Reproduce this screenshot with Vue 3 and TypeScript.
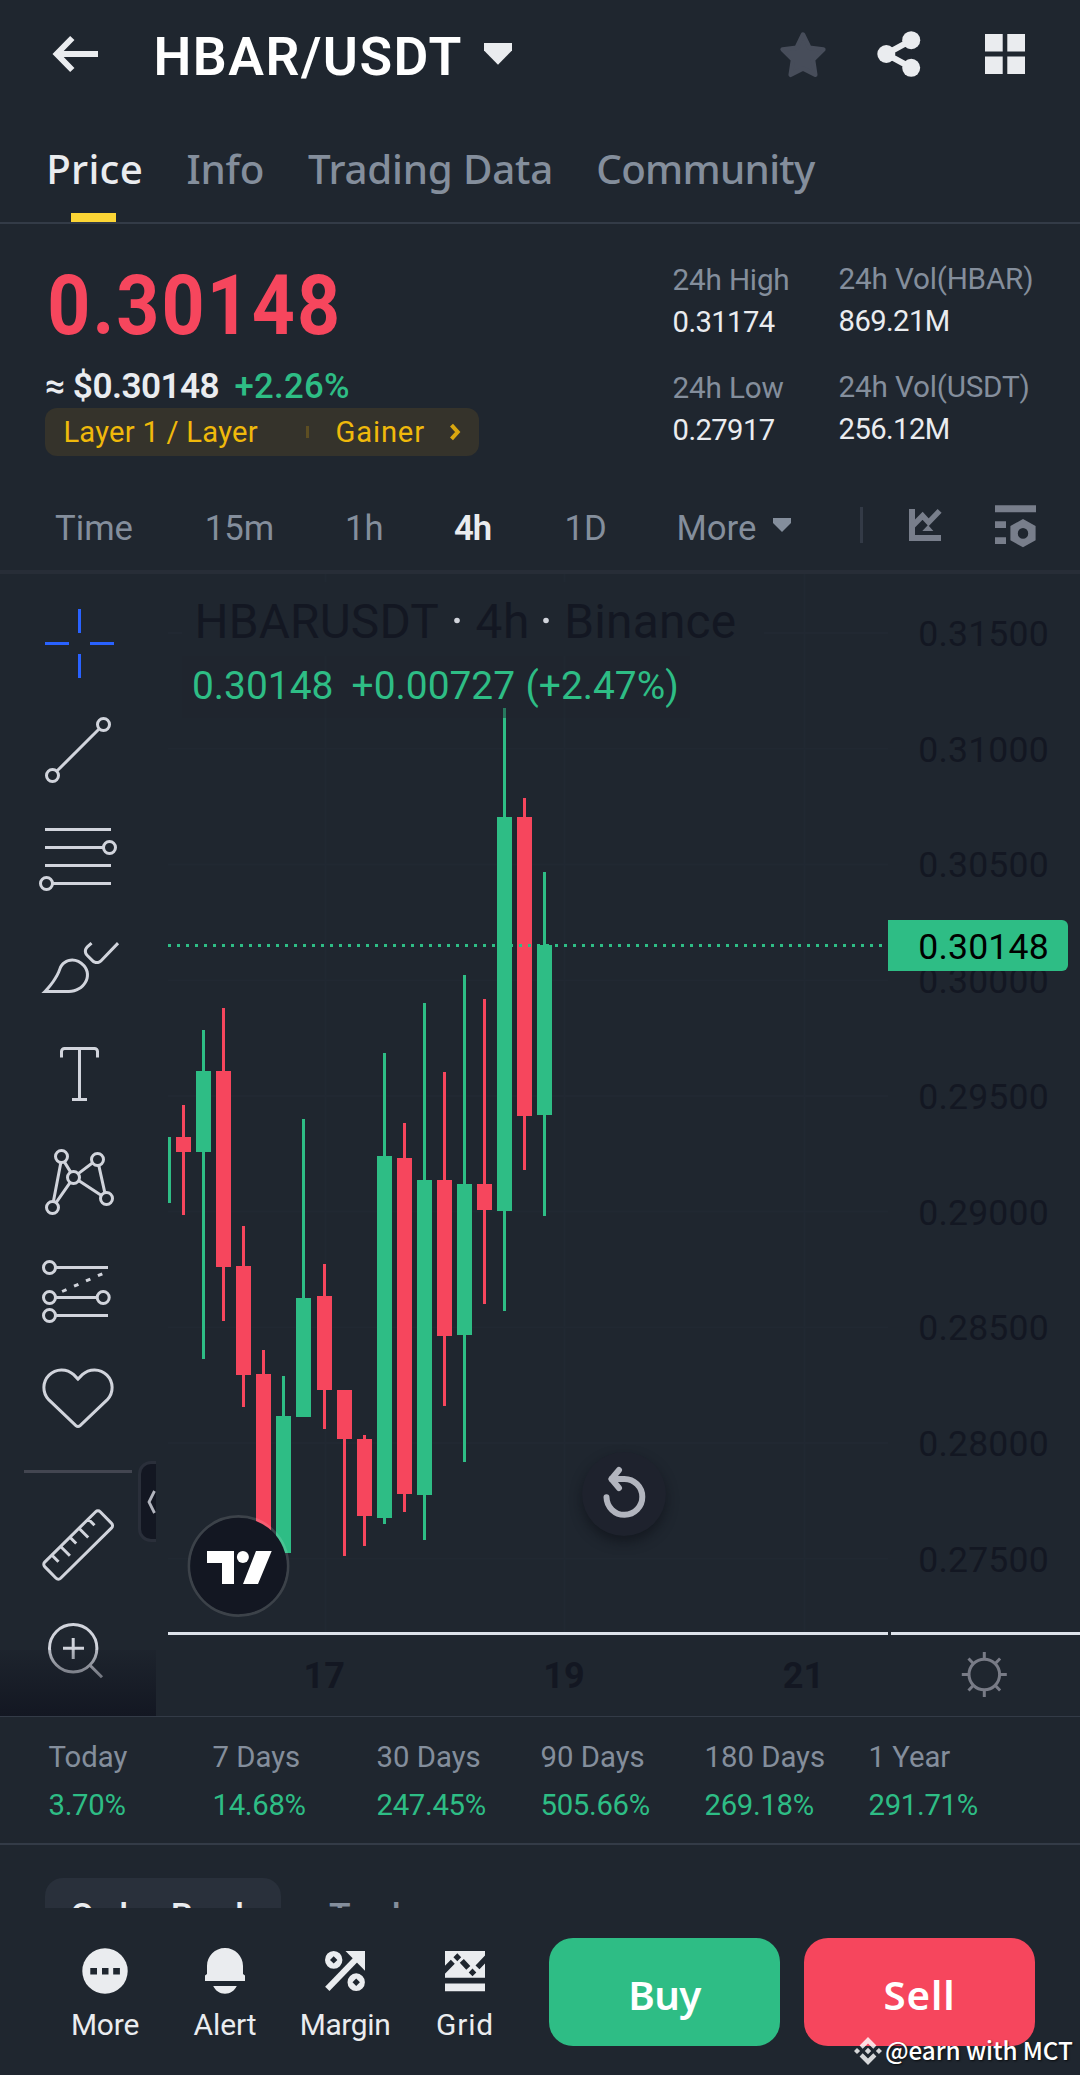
<script setup lang="ts">
interface Candle {
  x: number
  high: number
  top: number
  bottom: number
  low: number
  up: boolean
}

const tabs = ['Price', 'Info', 'Trading Data', 'Community']

const stats = [
  [
    { label: '24h High', value: '0.31174' },
    { label: '24h Low', value: '0.27917' },
  ],
  [
    { label: '24h Vol(HBAR)', value: '869.21M' },
    { label: '24h Vol(USDT)', value: '256.12M' },
  ],
]

const periods = ['Time', '15m', '1h', '4h', '1D']

const performance = [
  { label: 'Today', value: '3.70%' },
  { label: '7 Days', value: '14.68%' },
  { label: '30 Days', value: '247.45%' },
  { label: '90 Days', value: '505.66%' },
  { label: '180 Days', value: '269.18%' },
  { label: '1 Year', value: '291.71%' },
]

const c = (x: number, high: number, top: number, bottom: number, low: number, up: boolean): Candle => ({
  x, high, top, bottom, low, up,
})

const candles: Candle[] = [
  c(176, 1105, 1137, 1152, 1215, false),
  c(196, 1030, 1071, 1152, 1359, true),
  c(216, 1008, 1071, 1267, 1321, false),
  c(236, 1226, 1266, 1375, 1407, false),
  c(256, 1350, 1374, 1540, 1540, false),
  c(276, 1376, 1416, 1553, 1553, true),
  c(296, 1119, 1298, 1417, 1417, true),
  c(317, 1264, 1296, 1390, 1429, false),
  c(337, 1390, 1390, 1439, 1556, false),
  c(357, 1435, 1439, 1516, 1546, false),
  c(377, 1053, 1156, 1518, 1524, true),
  c(397, 1123, 1158, 1494, 1512, false),
  c(417, 1003, 1180, 1495, 1540, true),
  c(437, 1072, 1180, 1336, 1406, false),
  c(457, 975, 1184, 1335, 1462, true),
  c(477, 999, 1184, 1210, 1304, false),
  c(497, 708, 817, 1211, 1311, true),
  c(517, 798, 817, 1116, 1170, false),
  c(537, 872, 945, 1115, 1216, true),
]

const scale = ['0.31500', '0.31000', '0.30500', '0.30000', '0.29500', '0.29000', '0.28500', '0.28000', '0.27500']
const scaleY = (i: number): number => 646 + i * 115.72
</script>

<template>
  <main class="app">
    <header class="header">
      <svg class="back" width="50" height="112" viewBox="50 0 50 112" fill="none" stroke="#eaecef" stroke-width="6">
        <path d="M72.3 38 56.7 54l15.6 16M57 54h41" />
      </svg>
      <h1 class="pair">HBAR/USDT</h1>
      <svg class="pair-arrow" width="28" height="112" viewBox="484 0 28 112" fill="#eaecef">
        <path d="M484 43h28v7.5l-14 14.2-14-14.2z" />
      </svg>
      <svg class="star" width="50" height="112" viewBox="778 0 50 112">
        <path d="M803 34.5l6.4 13.2 14 1.7-10.4 10.2 2.3 15.2L803 68.6l-12.3 6.2 2.3-15.2-10.4-10.2 14-1.7z" fill="#474d5a" stroke="#474d5a" stroke-width="4.5" stroke-linejoin="round" />
      </svg>
      <svg class="share" width="50" height="112" viewBox="875 0 50 112" fill="#eaecef">
        <path d="M911 40.300 886 54l25 13.500" fill="none" stroke="#eaecef" stroke-width="6" />
        <circle cx="911.200" cy="40.200" r="9" />
        <circle cx="886.300" cy="54" r="9" />
        <circle cx="911.200" cy="67.800" r="9" />
      </svg>
      <svg class="apps" width="42" height="112" viewBox="984 0 42 112" fill="#eaecef">
        <path d="M985 34h17.700v17.500H985zM1007.300 34h17.700v17.500h-17.700zM985 56.500h17.700V74H985zM1007.300 56.500h17.700V74h-17.700z" />
      </svg>
    </header>

    <nav class="tabs">
      <span v-for="(tab, i) in tabs" :key="tab" class="tab" :class="[`tab-${i}`, { active: i === 0 }]">{{ tab }}</span>
    </nav>

    <section class="summary">
      <div class="quote">
        <div class="last">0.30148</div>
        <div class="fiat"><span class="approx">≈ $0.30148</span><span class="change">+2.26%</span></div>
        <div class="tags">
          <span class="tag-a">Layer 1 / Layer</span>
          <i class="tag-sep"></i>
          <span class="tag-b">Gainer</span>
          <svg width="12" height="20" viewBox="449.500 422.300 12 20" fill="none" stroke="#d9a70f" stroke-width="4">
            <path d="M452 425.500l6.200 6.800-6.200 6.800" />
          </svg>
        </div>
      </div>
      <div v-for="(col, i) in stats" :key="i" class="stat-col">
        <div v-for="s in col" :key="s.label" class="stat">
          <div class="stat-label">{{ s.label }}</div>
          <div class="stat-value">{{ s.value }}</div>
        </div>
      </div>
    </section>

    <section class="periods">
      <span v-for="p in periods" :key="p" :class="{ selected: p === '4h' }">{{ p }}</span>
      <span class="more">More
        <svg width="18" height="84" viewBox="773 486 18 84" fill="#848e9c"><path d="M773 518h18v5l-9 9-9-9z" /></svg>
      </span>
      <i class="divider"></i>
      <svg width="86" height="84" viewBox="908 486 86 84" fill="#787e8b">
        <path d="M909 509h6v26h26v6h-32zM922.300 531l5.700-6 5.400 6z" />
        <path d="M913 525.500l9.600-9.700 6 6.500 11-11.500" fill="none" stroke="#787e8b" stroke-width="5.500" />
      </svg>
      <svg width="43" height="84" viewBox="994 486 43 84" fill="#787e8b">
        <path d="M995 505.300h41v7h-41zM995 521.300h11v6.700h-11zM995 537.300h11v6.700h-11z" />
        <path fill-rule="evenodd" d="M1023 519l12.600 7v14.300l-12.600 7-12.600-7V526zM1023 528a5.200 5.400 0 1 0 0 10.800 5.200 5.400 0 1 0 0-10.800z" />
      </svg>
    </section>

    <section class="chart">
      <aside class="tools">
        <svg viewBox="0 0 28 28" class="cross"><path d="M14.500 3v8M14.500 18v8M3 14.500h8M18 14.500h8" /></svg>
        <svg viewBox="0 0 28 28"><path d="M6.900 21.100 21.100 6.900" /><circle cx="22.500" cy="5.500" r="2" /><circle cx="5.500" cy="22.500" r="2" /></svg>
        <svg viewBox="0 0 28 28"><path d="M3 4.500h22M3 10.500h19.500M3 16.500h22M5.500 22.500H25" /><circle cx="24.500" cy="10.500" r="2" /><circle cx="3.500" cy="22.500" r="2" /></svg>
        <svg viewBox="0 0 28 28" class="solid">
          <path d="M1.789 23l.859-.854.221-.228c.18-.19.38-.409.597-.655.619-.704 1.238-1.478 1.815-2.298.982-1.396 1.738-2.776 2.177-4.081 1.234-3.667 5.957-4.716 8.923-1.263 3.251 3.785-.037 9.380-5.379 9.380h-9.211zm9.211-1c4.544 0 7.272-4.642 4.621-7.728-2.450-2.853-6.225-2.015-7.216.931-.474 1.408-1.273 2.869-2.307 4.337-.599.852-1.241 1.653-1.882 2.383l-.068.078h6.853z" />
          <path d="M18.182 6.002l-1.419 1.286c-1.031.935-1.075 2.501-.096 3.480l1.877 1.877c.976.976 2.553.954 3.513-.045l5.650-5.874-.721-.693-5.650 5.874c-.574.596-1.507.609-2.086.031l-1.877-1.877c-.574-.574-.548-1.480.061-2.032l1.419-1.286-.672-.741z" />
        </svg>
        <svg viewBox="0 0 28 28"><path d="M8.500 8.500v-2a1 1 0 0 1 1-1h10a1 1 0 0 1 1 1v2M14.500 5.500v17M12 22.500h5" /></svg>
        <svg viewBox="0 0 28 28"><path d="M8.300 7.400 5.800 20.500M9.400 7.200l2.200 3.600M11.400 14.100 6.700 20.900M14.100 11.200l4.800-3.600M14.200 13.500l7.500 4.900M20.900 8.400l2 9" /><circle cx="8.500" cy="5.500" r="2" /><circle cx="20.500" cy="6.500" r="2" /><circle cx="12.500" cy="12.500" r="2" /><circle cx="23.500" cy="19.500" r="2" /><circle cx="5.500" cy="22.500" r="2" /></svg>
        <svg viewBox="0 0 28 28"><path d="M6.500 6.500H24M6.500 16.500h14M6.500 22.500H24" /><path d="M8.700 14.500 22.300 8.500" stroke-dasharray="1.600 2.750" /><circle cx="4.500" cy="6.500" r="2" /><circle cx="4.500" cy="16.500" r="2" /><circle cx="22.400" cy="16.500" r="2" /><circle cx="4.500" cy="22.500" r="2" /></svg>
        <svg viewBox="0 0 28 28"><path d="M14 7.700l-1.430-1.470A5.900 5.900 0 0 0 4.230 14.570L13.300 23.200q.7.600 1.400 0L23.770 14.570A5.900 5.900 0 0 0 15.430 6.230z" /></svg>
        <i class="tools-rule"></i>
        <svg viewBox="0 0 28 28"><path d="M19.900 2.900a1.050 1.050 0 0 1 1.500 0l3.800 3.900a1.050 1.050 0 0 1 0 1.500L8.200 25.100a1.050 1.050 0 0 1-1.500 0L2.900 21.200a1.050 1.050 0 0 1 0-1.500zM5.500 17.600l2 2M8.300 14.600l3 3M11.400 11.500l2 2M14.400 8.500l3 3M17.500 5.400l2 2" /></svg>
        <svg viewBox="0 0 28 28"><circle cx="12.400" cy="12.400" r="7.900" /><path d="M9 12.400h7M12.400 9v7M18 18.100l4 4" /></svg>
        <div class="fade"></div>
        <div class="handle">
          <svg width="9" height="24" viewBox="0 0 9 24" fill="none" stroke="#b2b5be" stroke-width="2.800"><path d="M7.500 1 2 12l5.500 11" /></svg>
        </div>
      </aside>

      <svg class="plot" width="924" height="1142" viewBox="156 574 924 1142">
        <g stroke="#212832" stroke-width="2">
          <path v-for="x in [325.500, 564.500, 804.500]" :key="x" :d="`M${x} 574V1632`" />
          <path v-for="(s, i) in scale" :key="s" :d="`M168 ${scaleY(i) - 13}H888`" />
        </g>
        <rect x="168" y="1137" width="3" height="66" fill="#2ebd85" />
        <g v-for="k in candles" :key="k.x" :fill="k.up ? '#2ebd85' : '#f6465d'">
          <rect :x="k.x + 6" :y="k.high" width="3" :height="k.low - k.high" />
          <rect :x="k.x" :y="k.top" width="15" :height="k.bottom - k.top" />
        </g>
        <path d="M168 945.500H884" stroke="#2ebd85" stroke-width="3" stroke-dasharray="3 6" />
        <rect x="182" y="582" width="582" height="74" fill="#1f262f" />
        <rect x="182" y="656" width="508" height="62" fill="#1f262f" opacity=".45" />

        <g class="legend-title" fill="#131722">
          <text x="194.600" y="638" letter-spacing=".15">HBARUSDT</text>
          <text x="475.600" y="638" letter-spacing=".6">4h</text>
          <text x="564.300" y="638" letter-spacing=".2">Binance</text>
        </g>
        <circle cx="457" cy="620.500" r="2.800" fill="#d1d4dc" />
        <circle cx="546" cy="620.500" r="2.800" fill="#d1d4dc" />
        <g class="legend-value" fill="#2ebd85">
          <text x="192" y="699">0.30148</text>
          <text x="351.600" y="699">+0.00727</text>
          <text x="525.500" y="699">(+2.47%)</text>
        </g>

        <g class="scale" fill="#131722">
          <text v-for="(s, i) in scale" :key="s" x="918.200" :y="scaleY(i)">{{ s }}</text>
        </g>
        <path d="M888 920h174a6 6 0 0 1 6 6v39a6 6 0 0 1-6 6H888z" fill="#2ebd85" />
        <text class="scale" x="918.200" y="959" fill="#000">0.30148</text>

        <path d="M168 1633.500H888M891 1633.500h189" stroke="#dde2ea" stroke-width="3" />
        <g class="dates" fill="#131722">
          <text x="303.500" y="1688">17</text>
          <text x="543.300" y="1688">19</text>
          <text x="782.800" y="1688">21</text>
        </g>
        <g fill="none" stroke="#787b86" stroke-width="3">
          <circle cx="984.300" cy="1674.500" r="15.300" />
          <path d="M984.300 1652v7.500M984.300 1689.500v7.500M961.800 1674.500h7.500M999.300 1674.500h7.500M968.500 1658.500l5 5.200M995.100 1685.300l5 5.200M1000.100 1658.500l-5 5.200M973.500 1685.300l-5 5.200" />
        </g>

        <circle cx="238.500" cy="1566" r="49.400" fill="none" stroke="#fff" stroke-opacity=".13" stroke-width="3" />
        <circle cx="238.500" cy="1566" r="48.300" fill="#131722" />
        <path d="M207 1551h27v33h-12v-21h-15zM256 1551h15.700l-13.700 33h-15z" fill="#fff" />
        <circle cx="242.900" cy="1557" r="6" fill="#fff" />
      </svg>

      <button class="reset" aria-label="Reset chart">
        <svg width="84" height="84" viewBox="581.500 1452 84 84" fill="none" stroke="#b2b5be" stroke-width="6" stroke-linecap="round" stroke-linejoin="round">
          <path d="M606 1497.300A17.900 17.900 0 1 0 623.900 1479H611" />
          <path d="M618.500 1470l-7.500 9 7.500 9" />
        </svg>
      </button>
    </section>

    <section class="performance">
      <div v-for="p in performance" :key="p.label" class="perf">
        <div class="perf-label">{{ p.label }}</div>
        <div class="perf-value">{{ p.value }}</div>
      </div>
    </section>

    <section class="book-tabs">
      <span class="book-tab current">Order Book</span>
      <span class="book-tab">Trades</span>
    </section>

    <footer class="bottom">
      <div class="action">
        <svg width="60" height="74" viewBox="75 1934 60 74" fill="#eaecef">
          <circle cx="105" cy="1971" r="22.700" />
          <path d="M90.300 1968h6.700v6.500h-6.700zM102 1968h6.500v6.500H102zM113.200 1968h6.700v6.500h-6.700z" fill="#1f262f" />
        </svg>
        <span class="action-more">More</span>
      </div>
      <div class="action">
        <svg width="60" height="74" viewBox="195 1934 60 74" fill="#eaecef">
          <path d="M207 1974v-8c0-10 8-18 18-18s18 8 18 18v8l2 1.500v5.500h-40v-5.500zM213.200 1986h23.600c-2 4.500-6.500 7.700-11.800 7.700s-9.800-3.200-11.800-7.700z" />
        </svg>
        <span class="action-alert">Alert</span>
      </div>
      <div class="action">
        <svg width="60" height="74" viewBox="315 1934 60 74" fill="#eaecef">
          <path fill-rule="evenodd" d="M333.700 1951a8.700 8.900 0 1 0 0 17.800 8.700 8.900 0 1 0 0-17.800zM333.700 1956.200l3.700 3.700-3.700 3.700-3.700-3.700z" />
          <path fill-rule="evenodd" d="M356.200 1973.300a8.700 8.900 0 1 0 0 17.800 8.700 8.900 0 1 0 0-17.800zM356.200 1978.500l3.700 3.700-3.700 3.700-3.700-3.700z" />
          <path d="M345.500 1951H365v19.700z" />
          <path d="M327.300 1988.800l29.500-30.500" stroke="#eaecef" stroke-width="6" />
        </svg>
        <span class="action-margin">Margin</span>
      </div>
      <div class="action">
        <svg width="60" height="74" viewBox="435 1934 60 74">
          <path d="M445 1951h40v26.800h-40zM445 1983.500h40v7.700h-40z" fill="#eaecef" />
          <g fill="none" stroke="#1f262f" stroke-width="5.500">
            <path d="M442.500 1972.300l10.300-10.500M461.800 1960.800l6.500 7M477.500 1967.300l10-10.500" />
          </g>
          <path d="M457.300 1953.300l3.900 4-3.900 4-3.900-4zM472.500 1968.500l3.800 3.900-3.800 3.900-3.800-3.900z" fill="#1f262f" />
        </svg>
        <span class="action-grid">Grid</span>
      </div>
      <button class="trade buy">Buy</button>
      <button class="trade sell">Sell</button>
    </footer>

    <div class="watermark">
      <svg width="28" height="28" viewBox="0 0 28 28" fill="#fff" fill-opacity=".82">
        <path d="M14 0l8.400 8.600-3.100 3.200L14 6.400l-5.300 5.400-3.100-3.200zM14 28l8.400-8.600-3.100-3.200L14 21.600l-5.300-5.400-3.100 3.200zM0 14l3-3.100L6.100 14 3 17.100zM21.900 14l3-3.100L28 14l-3.100 3.100zM10.800 14l3.200-3.200 3.200 3.200-3.200 3.200z" />
      </svg>
      <span>@earn with MCT</span>
    </div>
  </main>
</template>

<style>
body {
  background: #1f262f;
}
</style>

<style scoped>
.app {
  position: relative;
  width: 1080px;
  height: 2075px;
  overflow: hidden;
  background: #1f262f;
  color: #eaecef;
  font-family: Roboto, "Liberation Sans", sans-serif;
  white-space: nowrap;
}
svg {
  display: block;
  flex: none;
}
button {
  border: 0;
  padding: 0;
  margin: 0;
  font-family: inherit;
}

.header {
  display: flex;
  align-items: flex-start;
  height: 112px;
  padding-left: 50px;
}
.pair {
  margin: 0 0 0 53.400px;
  width: 330.600px;
  font-size: 53.500px;
  font-weight: 600;
  line-height: 114px;
  letter-spacing: 1.500px;
  color: #fff;
}
.star { margin-left: 266px; }
.share { margin-left: 47px; }
.apps { margin-left: 59px; }

.tabs {
  display: grid;
  grid-template-columns: 140.200px 121.600px 288.300px auto;
  height: 110px;
  padding-left: 46.200px;
  border-bottom: 2px solid #333b47;
}
.tab {
  position: relative;
  font-family: "Noto Sans", Roboto, sans-serif;
  font-size: 40.300px;
  font-weight: 500;
  line-height: 113px;
  color: #848e9c;
}
.tab-0 { letter-spacing: .3px; }
.tab-1 { letter-spacing: -.2px; }
.tab-2 { letter-spacing: -.2px; }
.tab-3 { letter-spacing: -.7px; }
.tab.active { color: #eaecef; }
.tab.active::after {
  content: "";
  position: absolute;
  left: 25px;
  top: 101px;
  width: 45px;
  height: 9px;
  background: #fcd535;
}

.summary {
  display: grid;
  grid-template-columns: 627.600px 166px auto;
  box-sizing: border-box;
  height: 262px;
  padding: 33px 0 0 45px;
}
.quote { padding-top: 7px; }
.last {
  width: 340px;
  padding-left: 2.500px;
  font-size: 83.500px;
  font-weight: 700;
  line-height: 84px;
  letter-spacing: 2.300px;
  color: #f6465d;
  transform: scaleX(.9);
  transform-origin: 0 0;
}
.fiat {
  display: flex;
  margin-top: 16px;
  line-height: 44px;
  font-size: 35.200px;
}
.approx {
  width: 189.500px;
  font-weight: 600;
  letter-spacing: -.55px;
}
.change {
  font-size: 34.700px;
  font-weight: 500;
  letter-spacing: .3px;
  color: #2ebd85;
}
.tags {
  display: flex;
  align-items: center;
  box-sizing: border-box;
  width: 434px;
  height: 48px;
  padding-left: 18.400px;
  border-radius: 12px;
  background: #35332b;
  color: #f0b90b;
  font-size: 29.200px;
  line-height: 50px;
}
.tag-a { width: 242.600px; letter-spacing: .24px; }
.tag-sep { width: 3px; height: 12px; background: #5d4e22; }
.tag-b { margin-left: 26.500px; width: 114px; letter-spacing: .85px; }

.stat-col {
  display: flex;
  flex-direction: column;
  gap: 24px;
  padding-top: 1px;
}
.stat-col:nth-child(2) { padding-top: 2px; }
.stat-label {
  font-size: 29.700px;
  line-height: 42px;
  letter-spacing: -.2px;
  color: #848e9c;
}
.stat-value {
  font-size: 29.200px;
  font-weight: 450;
  line-height: 42px;
  letter-spacing: -.6px;
}

.periods {
  display: grid;
  grid-template-columns: 149.700px 140.300px 109px 110.500px 112px 183.500px 48px 86px auto;
  align-items: center;
  height: 84px;
  padding-left: 55px;
  border-bottom: 4px solid #272d37;
  font-size: 34.700px;
  line-height: 84px;
  color: #848e9c;
}
.selected {
  font-weight: 600;
  color: #eaecef;
  letter-spacing: -1px;
}
.more {
  display: flex;
  gap: 17px;
}
.divider {
  width: 3px;
  height: 36px;
  margin-bottom: 6px;
  background: #333a46;
}

.chart {
  position: relative;
  display: flex;
  height: 1142px;
}
.tools {
  position: relative;
  display: flex;
  flex-direction: column;
  gap: 24px;
  box-sizing: border-box;
  width: 156px;
  padding: 26px 0 0 36px;
}
.tools > svg {
  width: 84px;
  height: 84px;
  fill: none;
  stroke: #d1d4dc;
  stroke-width: 1;
}
.tools > .cross { stroke: #2962ff; }
.tools > .solid { fill: #d1d4dc; stroke: none; }
.tools-rule {
  width: 108px;
  height: 3px;
  margin: 6px 0 6px -12px;
  background: #434651;
}
.fade {
  position: absolute;
  left: 0;
  bottom: 0;
  width: 156px;
  height: 66px;
  background: linear-gradient(to bottom, rgba(19, 23, 34, .15), #131722);
}
.handle {
  position: absolute;
  right: 0;
  top: 887px;
  display: flex;
  align-items: center;
  justify-content: flex-end;
  box-sizing: border-box;
  width: 18px;
  height: 81px;
  border: 3px solid #2a2f3a;
  border-right: 0;
  border-radius: 13px 0 0 13px;
  background: #131722;
}
.plot text { font-family: Roboto, sans-serif; }
.legend-title { font-size: 47.800px; }
.legend-value { font-size: 38.900px; }
.scale { font-size: 35.600px; letter-spacing: .2px; }
.dates { font-size: 36.100px; font-weight: 700; }
.reset {
  position: absolute;
  left: 581.500px;
  top: 878px;
  width: 84px;
  height: 84px;
  border-radius: 50%;
  background: #1e222d;
  box-shadow: 0 6px 12px rgba(13, 16, 24, .6);
}

.performance {
  display: grid;
  grid-template-columns: repeat(6, 164px);
  box-sizing: border-box;
  height: 129px;
  padding: 20px 0 0 48.500px;
  border-top: 1px solid #333b47;
  border-bottom: 2px solid #333b47;
}
.perf-label {
  font-size: 29.300px;
  line-height: 40px;
  color: #848e9c;
}
.perf-value {
  margin-top: 8px;
  font-size: 29.300px;
  font-weight: 450;
  line-height: 40px;
  letter-spacing: -.3px;
  color: #2ebd85;
}

.book-tabs {
  display: flex;
  box-sizing: border-box;
  height: 63px;
  padding: 33px 0 0 45px;
  overflow: hidden;
}
.book-tab {
  height: 72px;
  padding-left: 48px;
  font-size: 35.500px;
  font-weight: 500;
  line-height: 77px;
  color: #848e9c;
}
.current {
  box-sizing: border-box;
  width: 236px;
  padding-left: 25px;
  border-radius: 18px;
  background: #29303b;
  color: #eaecef;
  letter-spacing: .6px;
}

.bottom {
  display: flex;
  box-sizing: border-box;
  height: 167px;
  padding: 26px 0 0 45px;
  background: #1f262f;
}
.action {
  display: flex;
  flex-direction: column;
  align-items: center;
  width: 120px;
  font-size: 29.900px;
  line-height: 33px;
}
.action-more { letter-spacing: -.18px; }
.action-alert { letter-spacing: -.1px; }
.action-margin { letter-spacing: -.34px; }
.action-grid { letter-spacing: .79px; }
.trade {
  width: 231px;
  height: 108px;
  margin: 4px 0 0 24px;
  border-radius: 24px;
  font-family: "Noto Sans", Roboto, sans-serif;
  font-size: 40.300px;
  font-weight: 600;
  line-height: 113px;
  color: #fff;
}
.buy { background: #2ebd85; letter-spacing: -.6px; }
.sell { background: #f6465d; letter-spacing: .9px; }

.watermark {
  position: absolute;
  left: 854px;
  top: 2037px;
  display: flex;
  align-items: center;
  gap: 3px;
  height: 28px;
  color: #fff;
  font-family: "Noto Sans CJK SC", sans-serif;
  font-size: 24.300px;
  font-weight: 500;
  line-height: 24px;
  letter-spacing: -.1px;
  text-shadow: 1px 1px 2px rgba(0, 0, 0, .7);
}
.watermark span { margin-top: -3px; }
</style>
